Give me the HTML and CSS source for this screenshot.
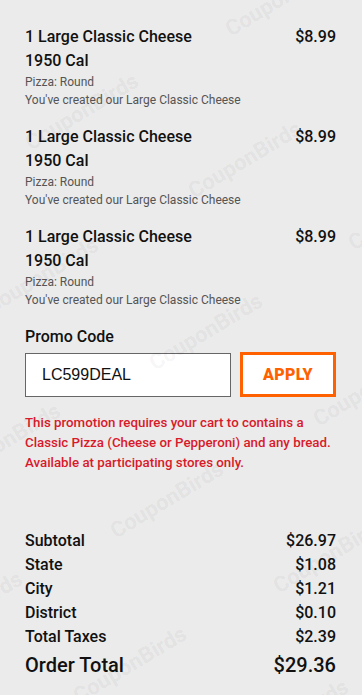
FILE: index.html
```html
<!DOCTYPE html>
<html lang="en">
<head>
    <meta charset="UTF-8">
    <meta name="viewport" content="width=device-width, initial-scale=1.0">
    <title>Cart</title>
    <link rel="stylesheet" href="styles.css">
</head>
<body>
    <div class="cart">
        <div class="item">
            <div class="item-head">
                <div class="item-name">1 Large Classic Cheese<br>1950 Cal</div>
                <div class="item-price">$8.99</div>
            </div>
            <div class="item-info">Pizza: Round</div>
            <div class="item-info">You've created our Large Classic Cheese</div>
        </div>
        <div class="item">
            <div class="item-head">
                <div class="item-name">1 Large Classic Cheese<br>1950 Cal</div>
                <div class="item-price">$8.99</div>
            </div>
            <div class="item-info">Pizza: Round</div>
            <div class="item-info">You've created our Large Classic Cheese</div>
        </div>
        <div class="item">
            <div class="item-head">
                <div class="item-name">1 Large Classic Cheese<br>1950 Cal</div>
                <div class="item-price">$8.99</div>
            </div>
            <div class="item-info">Pizza: Round</div>
            <div class="item-info">You've created our Large Classic Cheese</div>
        </div>

        <div class="promo">
            <label for="promoInput">Promo Code</label>
            <div class="promo-row">
                <input type="text" id="promoInput" value="LC599DEAL">
                <button class="apply">APPLY</button>
            </div>
            <p class="promo-error">This promotion requires your cart to contains a Classic Pizza (Cheese or Pepperoni) and any bread. Available at participating stores only.</p>
        </div>

        <div class="totals">
            <div class="row"><span>Subtotal</span><span>$26.97</span></div>
            <div class="row"><span>State</span><span>$1.08</span></div>
            <div class="row"><span>City</span><span>$1.21</span></div>
            <div class="row"><span>District</span><span>$0.10</span></div>
            <div class="row"><span>Total Taxes</span><span>$2.39</span></div>
            <div class="row grand"><span>Order Total</span><span>$29.36</span></div>
        </div>
    </div>

    <!-- watermark layer -->
    <div class="watermark">
        <span class="wm wm1">CouponBirds</span>
        <span class="wm wm2">CouponBirds</span>
        <span class="wm wm3">CouponBirds</span>
        <span class="wm wm4">CouponBirds</span>
        <span class="wm wm5">CouponBirds</span>
        <span class="wm wm6">CouponBirds</span>
        <span class="wm wm7">CouponBirds</span>
        <span class="wm wm8">CouponBirds</span>
        <span class="wm wm9">CouponBirds</span>
        <span class="wm wm10">CouponBirds</span>
        <span class="wm wm11">CouponBirds</span>
        <span class="wm wm12">CouponBirds</span>
        <span class="wm wm13">CouponBirds</span>
    </div>
</body>
</html>
```

FILE: styles.css
```css
body {
    margin: 0;
    background-color: #ebebeb;
    font-family: Roboto, "Liberation Sans", sans-serif;
    color: #111;
    position: relative;
    overflow: hidden;
    height: 695px;
}

.cart {
    padding: 25px 26px 20px 25px;
}

.item {
    height: 100px;
}

.item-head {
    display: flex;
    justify-content: space-between;
    font-size: 16px;
    font-weight: 500;
    line-height: 24px;
}

.item-info {
    font-size: 12px;
    line-height: 18px;
    color: #555;
}

.promo label {
    display: block;
    font-size: 16px;
    font-weight: 500;
    line-height: 24px;
}

.promo-row {
    display: flex;
    gap: 9px;
    margin-top: 4px;
}

.promo-row input {
    width: 206px;
    height: 44px;
    box-sizing: border-box;
    border: 1px solid #666;
    background: #fff;
    padding: 0 16px;
    font-family: "Liberation Sans", Arial, sans-serif;
    font-size: 16px;
    color: #111;
    outline: none;
}

.apply {
    width: 96px;
    height: 45px;
    box-sizing: border-box;
    border: 3px solid #ff6000;
    background: #fff;
    color: #ff6000;
    font-family: Roboto, sans-serif;
    font-size: 16px;
    font-weight: 900;
    letter-spacing: 0.3px;
    margin-top: -1px;
}

.promo-error {
    margin: 16px 0 0;
    font-size: 13.3px;
    font-weight: 500;
    line-height: 20px;
    color: #d81a2a;
}

.totals {
    margin-top: 56px;
}

.row {
    display: flex;
    justify-content: space-between;
    font-size: 16px;
    font-weight: 500;
    line-height: 24px;
}

.row.grand {
    font-size: 20px;
    line-height: 32px;
}

.watermark {
    position: absolute;
    inset: 0;
    pointer-events: none;
}

.wm {
    position: absolute;
    width: 140px;
    margin-left: -70px;
    margin-top: -13px;
    text-align: center;
    font-family: Roboto, sans-serif;
    font-weight: 700;
    font-size: 22px;
    line-height: 26px;
    color: rgba(0, 0, 0, 0.055);
    transform: rotate(-31deg);
    white-space: nowrap;
}

.wm1 { left: 282px; top: -2px; }
.wm2 { left: 82px; top: 112px; }
.wm3 { left: 245px; top: 160px; }
.wm4 { left: 405px; top: 212px; }
.wm5 { left: 42px; top: 276px; }
.wm6 { left: 206px; top: 332px; }
.wm7 { left: 370px; top: 388px; }
.wm8 { left: 4px; top: 442px; }
.wm9 { left: 167px; top: 500px; }
.wm10 { left: 330px; top: 555px; }
.wm11 { left: -34px; top: 610px; }
.wm12 { left: 130px; top: 665px; }
.wm13 { left: 292px; top: 718px; }
```
